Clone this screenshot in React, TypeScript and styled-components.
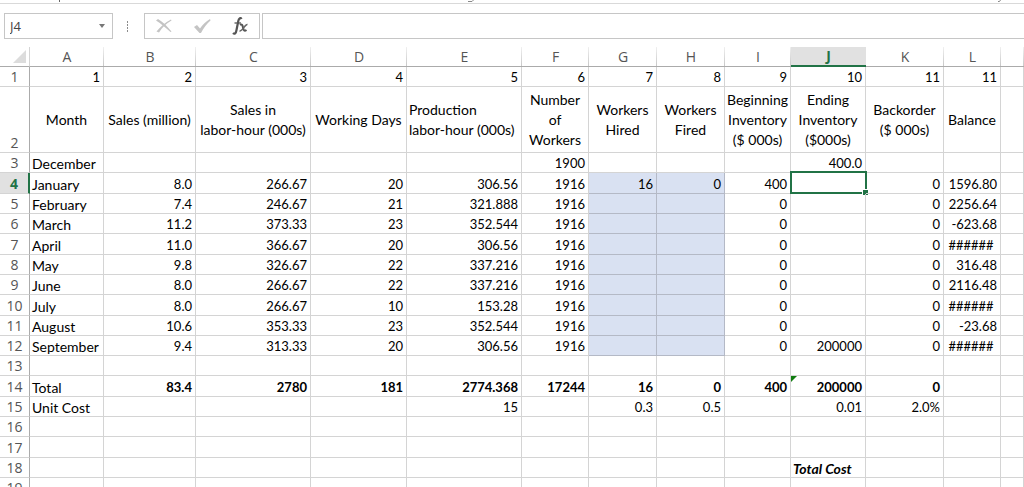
import React from 'react';
import styled, { createGlobalStyle, css } from 'styled-components';

const GlobalStyle = createGlobalStyle`
  * { box-sizing: border-box; }
  html, body { margin: 0; padding: 0; background: #fff; }
  body { font-family: Lato, Calibri, sans-serif; font-size: 13px; color: #000; }
`;

const uiFont = "'Open Sans', 'Segoe UI', sans-serif";
const line = '#d4d4d4';
const green = '#217346';

const Window = styled.div`
  display: flex;
  flex-direction: column;
  height: 100vh;
  overflow: hidden;
`;

const RibbonEdge = styled.div`
  flex: none;
  display: grid;
  grid-template-columns: 59px 409px 530px 1fr;
  height: 4px;
  border-bottom: 1px solid #d9d9d9;
`;

const Descender = styled.svg`
  display: block;
  width: 6px;
  height: 3px;
`;

const FormulaBar = styled.div`
  flex: none;
  display: flex;
  align-items: stretch;
  height: 26px;
  margin: 9px 0 8px;
  padding-left: 4px;
`;

const NameBox = styled.div`
  display: flex;
  align-items: center;
  width: 109px;
  border: 1px solid #c6c6c6;
`;

const NameInput = styled.input`
  flex: 1;
  min-width: 0;
  height: 100%;
  padding: 0 0 0 5px;
  border: 0;
  outline: 0;
  background: transparent;
  font: 13px ${uiFont};
  color: #444;
`;

const BareButton = styled.button`
  display: flex;
  align-items: center;
  justify-content: center;
  height: 100%;
  padding: 0;
  border: 0;
  background: none;
`;

const DropButton = styled(BareButton)`
  width: 20px;
`;

const Grip = styled.svg`
  align-self: center;
  width: 3px;
  height: 11px;
  margin: 0 15px 0 13px;
`;

const Tools = styled.div`
  display: flex;
  width: 116px;
  border: 1px solid #c6c6c6;
`;

const ToolButton = styled(BareButton)`
  flex: 1;
`;

const FormulaInput = styled.input`
  flex: 1;
  min-width: 0;
  margin-left: 2px;
  padding: 0 6px;
  border: 1px solid #c6c6c6;
  border-right: 0;
  outline: 0;
  font: 13px ${uiFont};
`;

const Grid = styled.div`
  flex: 1;
  min-height: 0;
  overflow: hidden;
`;

const Sheet = styled.table`
  width: 100%;
  table-layout: fixed;
  border-collapse: separate;
  border-spacing: 0;
`;

const Col = styled.col<{ $w?: number }>`
  ${p => p.$w && `width: ${p.$w}px;`}
`;

const ColumnHead = styled.th<{ $active?: boolean }>`
  height: 20px;
  padding: 0;
  border-bottom: 1px solid #ababab;
  background: linear-gradient(#f0f0f0, #c8c8c8) right / 1px 100% no-repeat;
  font: 14px/19px ${uiFont};
  color: #555;
  ${p => p.$active && css`
    border-bottom: 2px solid ${green};
    background: #e1e1e1;
    line-height: 18px;
    font-weight: 700;
    color: ${green};
  `}
`;

const Corner = styled.td`
  padding: 0 3px 3px 0;
  border-right: 1px solid #d4d4d4;
  border-bottom: 1px solid #ababab;
  vertical-align: bottom;
`;

const CornerMark = styled.svg`
  display: block;
  width: 13px;
  height: 13px;
  margin-left: auto;
`;

const Row = styled.tr<{ $h: number }>`
  height: ${p => p.$h}px;
`;

const RowHead = styled.th<{ $active?: boolean }>`
  padding: 0;
  border-right: 1px solid #ababab;
  border-bottom: 1px solid ${line};
  vertical-align: bottom;
  text-align: center;
  font: 14px/19px ${uiFont};
  color: #555;
  ${p => p.$active && css`
    border-right: 2px solid ${green};
    background: #e1e1e1;
    font-weight: 700;
    color: ${green};
  `}
`;

type Align = 'left' | 'right' | 'center';

const Cell = styled.td<{ $align: Align; $bold?: boolean; $italic?: boolean; $fill?: boolean; $wrap?: boolean }>`
  position: relative;
  padding: 0 ${p => (p.$align === 'right' ? 3 : 2)}px;
  border-right: 1px solid ${p => (p.$fill ? '#b4b9c6' : line)};
  border-bottom: 1px solid ${p => (p.$fill ? '#b4b9c6' : line)};
  background: ${p => (p.$fill ? '#d9e1f2' : 'transparent')};
  text-align: ${p => p.$align};
  vertical-align: ${p => (p.$wrap ? 'middle' : 'bottom')};
  font-size: ${p => (p.$align === 'right' ? 13 : 14)}px;
  line-height: ${p => (p.$wrap ? 20 : 17)}px;
  font-weight: ${p => (p.$bold ? 700 : 400)};
  font-style: ${p => (p.$italic ? 'italic' : 'normal')};
  white-space: pre;
`;

const Selection = styled.div`
  position: absolute;
  inset: -2px -2px -1px -1px;
  border: 2px solid ${green};
  &::after {
    content: '';
    position: absolute;
    right: -3px;
    bottom: -3px;
    width: 5px;
    height: 5px;
    background: ${green};
    box-shadow: -1px -1px 0 #fff;
  }
`;

const ErrorMark = styled.svg`
  position: absolute;
  top: 0;
  left: 0;
  width: 6px;
  height: 6px;
`;

const letters = 'ABCDEFGHIJKL'.split('');
const widths = [30, 74, 92, 115, 96, 115, 67, 68, 68, 66, 75, 78, 57];

const months: string[][] = [
  ['January', '8.0', '266.67', '20', '306.56', '1916', '16', '0', '400', '', '0', '1596.80'],
  ['February', '7.4', '246.67', '21', '321.888', '1916', '', '', '0', '', '0', '2256.64'],
  ['March', '11.2', '373.33', '23', '352.544', '1916', '', '', '0', '', '0', '-623.68'],
  ['April', '11.0', '366.67', '20', '306.56', '1916', '', '', '0', '', '0', '###### '],
  ['May', '9.8', '326.67', '22', '337.216', '1916', '', '', '0', '', '0', '316.48'],
  ['June', '8.0', '266.67', '22', '337.216', '1916', '', '', '0', '', '0', '2116.48'],
  ['July', '8.0', '266.67', '10', '153.28', '1916', '', '', '0', '', '0', '###### '],
  ['August', '10.6', '353.33', '23', '352.544', '1916', '', '', '0', '', '0', '-23.68'],
  ['September', '9.4', '313.33', '20', '306.56', '1916', '', '', '0', '200000', '0', '###### '],
];

const rows: string[][] = [
  ['1', '2', '3', '4', '5', '6', '7', '8', '9', '10', '11', '11'],
  ['Month', 'Sales (million)', 'Sales in\nlabor-hour (000s)', 'Working Days', 'Production\nlabor-hour (000s)',
    'Number\nof\nWorkers', 'Workers\nHired', 'Workers\nFired', 'Beginning\nInventory\n($ 000s)',
    'Ending\nInventory\n($000s)', 'Backorder\n($ 000s)', 'Balance'],
  ['December', '', '', '', '', '1900', '', '', '', '400.0', '', ''],
  ...months,
  [],
  ['Total', '83.4', '2780', '181', '2774.368', '17244', '16', '0', '400', '200000', '0', ''],
  ['Unit Cost', '', '', '', '15', '', '0.3', '0.5', '', '0.01', '2.0%', ''],
  [],
  [],
  ['', '', '', '', '', '', '', '', '', 'Total Cost', '', ''],
  [],
];

const tallRows = [4, 7, 10, 14, 17];
const rowHeight = (n: number) => (n === 2 ? 66 : tallRows.includes(n) ? 21 : 20);

function alignOf(n: number, col: string): Align {
  if (n === 2) return col === 'E' ? 'left' : 'center';
  if (n === 18 || (col === 'A' && n > 2)) return 'left';
  return 'right';
}

function SheetRow({ n, values }: { n: number; values: string[] }) {
  return (
    <Row $h={rowHeight(n)}>
      <RowHead scope="row" $active={n === 4}>{n}</RowHead>
      {letters.map((col, i) => (
        <Cell
          key={col}
          $align={alignOf(n, col)}
          $wrap={n === 2}
          $bold={(n === 14 && col !== 'A') || n === 18}
          $italic={n === 18}
          $fill={(col === 'G' || col === 'H') && n >= 4 && n <= 12}
        >
          {values[i]}
          {n === 4 && col === 'J' && <Selection />}
          {n === 14 && col === 'J' && (
            <ErrorMark viewBox="0 0 6 6"><path d="M0 0H6L0 6Z" fill="#107c10" /></ErrorMark>
          )}
        </Cell>
      ))}
      <Cell $align="left" />
    </Row>
  );
}

export default function App() {
  return (
    <Window>
      <GlobalStyle />
      <RibbonEdge>
        <span />
        <Descender viewBox="0 0 6 3"><path d="M.5 0V2" stroke="#666" /></Descender>
        <Descender viewBox="0 0 6 3"><path d="M0 1.5H4L5.500 0" stroke="#888" fill="none" /></Descender>
        <Descender viewBox="0 0 6 3"><path d="M0 1.500H1.500L2.500 0" stroke="#888" fill="none" /></Descender>
      </RibbonEdge>
      <FormulaBar>
        <NameBox>
          <NameInput aria-label="Name box" defaultValue="J4" />
          <DropButton aria-label="Open name list">
            <svg width="6" height="4" viewBox="0 0 6 4"><path d="M0 0H6L3 4Z" fill="#777" /></svg>
          </DropButton>
        </NameBox>
        <Grip viewBox="0 0 3 11">
          <path d="M1 0h1v2h-1zM1 3h1v2h-1zM1 6h1v2h-1zM1 9h1v2h-1z" fill="#8c8c8c" />
        </Grip>
        <Tools>
          <ToolButton aria-label="Cancel">
            <svg width="16" height="14" viewBox="0 0 16 14">
              <path d="M0 1.500L2 0C7 3 11 7 15.500 12.500L14.500 13C10 9 5 4.500 0 1.500Z" fill="#c4c4c4" />
              <path d="M15 .5L15.500 1.500C10 4.500 6 8.500 3 13.500L.5 12.500C4 8 9 3.500 15 .5Z" fill="#c4c4c4" />
            </svg>
          </ToolButton>
          <ToolButton aria-label="Enter">
            <svg width="17" height="14" viewBox="0 0 17 14">
              <path d="M0 8L3 6L6 9.500C8.500 5.500 12 2.500 16 0L16.500 1.500C12.500 5 9.500 9 7 14H5.500Z" fill="#c4c4c4" />
            </svg>
          </ToolButton>
          <ToolButton aria-label="Insert function">
            <svg width="16" height="18" viewBox="0 0 16 18">
              <path d="M9.500 2C8.500 0 6.800 1.500 6.300 4L4.500 13C4 16.500 2.500 17.500 1 16" stroke="#555" strokeWidth="2.200" fill="none" />
              <path d="M2.500 6H9" stroke="#555" strokeWidth="1.300" />
              <path d="M8 8C10 6.500 10.500 8.500 11 10.500C11.500 13.500 12.500 14.500 14.500 13" stroke="#555" strokeWidth="2" fill="none" />
              <path d="M15.500 7.500C13 7 10.500 14.500 7.500 14" stroke="#666" strokeWidth="1.400" fill="none" />
            </svg>
          </ToolButton>
        </Tools>
        <FormulaInput aria-label="Formula" />
      </FormulaBar>
      <Grid>
        <Sheet>
          <colgroup>
            {widths.map((w, i) => <Col key={i} $w={w} />)}
            <Col />
          </colgroup>
          <thead>
            <tr>
              <Corner>
                <CornerMark viewBox="0 0 13 13"><path d="M13 0V13H0Z" fill="#dcdcdc" /></CornerMark>
              </Corner>
              {letters.map(col => (
                <ColumnHead key={col} scope="col" $active={col === 'J'}>{col}</ColumnHead>
              ))}
              <ColumnHead />
            </tr>
          </thead>
          <tbody>
            {rows.map((values, i) => <SheetRow key={i} n={i + 1} values={values} />)}
          </tbody>
        </Sheet>
      </Grid>
    </Window>
  );
}
